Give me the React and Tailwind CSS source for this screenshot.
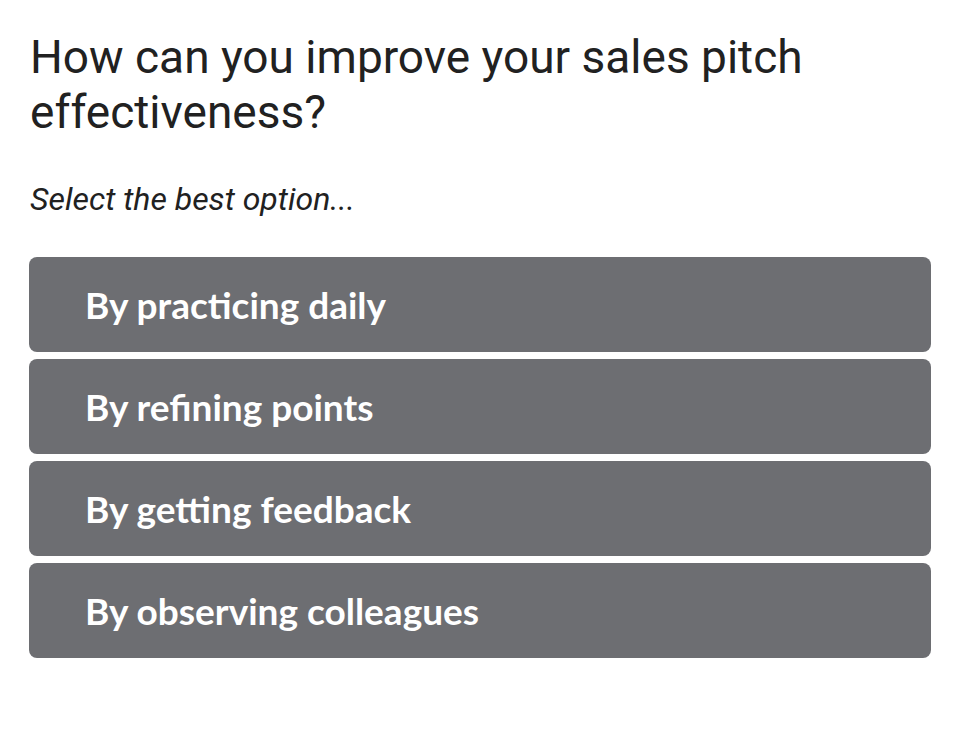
import React from "react";

const options = [
  "By practicing daily",
  "By refining points",
  "By getting feedback",
  "By observing colleagues",
];

// Single-choice question card
const App = () => {
  return (
    <div className="min-h-[729px] bg-white pl-[29px] pt-[30px] font-['Roboto',sans-serif] text-[#212121]">
      <h1 className="w-[900px] pl-px text-[46px] leading-[55px]">
        How can you improve your sales pitch effectiveness?
      </h1>
      <p className="mt-[40px] pl-px text-[32px] italic leading-[38px]">
        Select the best option...
      </p>
      <div className="mt-[39px] flex w-[902px] flex-col gap-[7.5px]">
        {options.map((option) => (
          <button
            key={option}
            className="flex h-[94.5px] items-center rounded-lg bg-[#6d6e72] pl-[56px] text-left font-['Lato',sans-serif] text-[37px] font-bold text-white"
          >
            {option}
          </button>
        ))}
      </div>
    </div>
  );
};

export default App;
